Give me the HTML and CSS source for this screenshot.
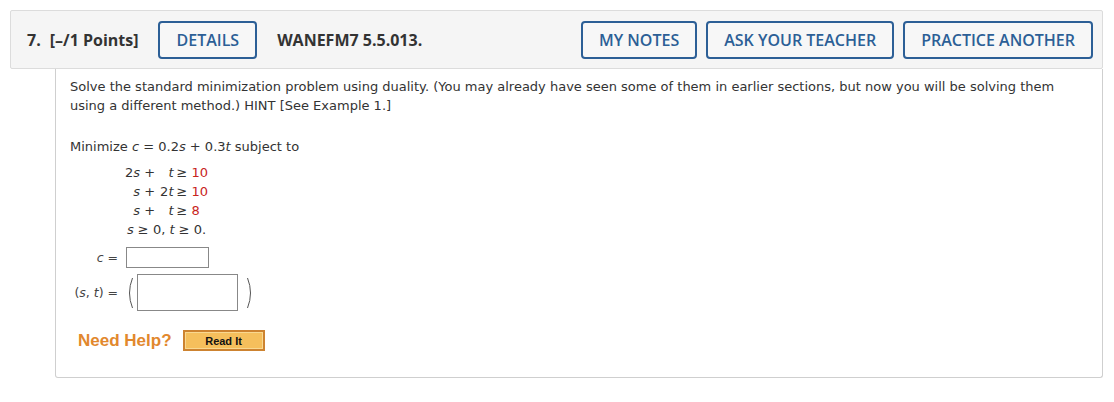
FILE: index.html
```html
<!DOCTYPE html>
<html>
<head>
<meta charset="utf-8">
<link rel="stylesheet" href="styles.css">
</head>
<body>
<div class="question">
  <div class="qhead">
    <span class="qnum">7.</span>
    <span class="points">[–/1 Points]</span>
    <span class="btn">DETAILS</span>
    <span class="qid">WANEFM7 5.5.013.</span>
    <span class="spacer"></span>
    <span class="btn">MY NOTES</span>
    <span class="btn">ASK YOUR TEACHER</span>
    <span class="btn">PRACTICE ANOTHER</span>
  </div>
  <div class="qbody">
    <p class="intro">Solve the standard minimization problem using duality. (You may already have seen some of them in earlier sections, but now you will be solving them using a different method.) HINT [See Example 1.]</p>
    <p class="minimize">Minimize <i>c</i> = 0.2<i>s</i> + 0.3<i>t</i> subject to</p>
    <div class="constraints">
      <span class="c1">2<i>s</i> +</span><span class="c2"><i>t</i></span><span class="c3">≥ <span class="red">10</span></span>
      <span class="c1"><i>s</i> +</span><span class="c2">2<i>t</i></span><span class="c3">≥ <span class="red">10</span></span>
      <span class="c1"><i>s</i> +</span><span class="c2"><i>t</i></span><span class="c3">≥ <span class="red">8</span></span>
      <span class="last"><i>s</i> ≥ 0, <i>t</i> ≥ 0.</span>
    </div>
    <div class="answers">
      <div class="arow">
        <span class="label"><i>c</i> =</span>
        <span class="box small"></span>
      </div>
      <div class="arow">
        <span class="label">(<i>s</i>, <i>t</i>) =</span>
        <svg class="paren" width="8" height="32" viewBox="0 0 8 32"><path d="M6.5 1 Q0.5 16 6.5 31" fill="none" stroke="#555" stroke-width="1"/></svg>
        <span class="box big"></span>
        <svg class="paren right" width="8" height="32" viewBox="0 0 8 32"><path d="M1.5 1 Q7.5 16 1.5 31" fill="none" stroke="#555" stroke-width="1"/></svg>
      </div>
    </div>
    <div class="help">
      <span class="needhelp">Need Help?</span>
      <span class="readit">Read It</span>
    </div>
  </div>
</div>
</body>
</html>
```
FILE: styles.css
```css
html, body { margin: 0; padding: 0; background: #fff; }
body { padding: 10px 11px 0 10px; }

.question { width: 1093px; }

.qhead {
  display: flex;
  align-items: center;
  height: 57px;
  padding: 0 9px 0 16px;
  background: #f5f5f5;
  border: 1px solid #dcdcdc;
  border-radius: 2px;
  font-family: "Open Sans", sans-serif;
  color: #333;
}
.qnum { font-weight: 700; font-size: 16px; margin-right: 9px; }
.points { font-weight: 700; font-size: 16px; margin-right: 20px; }
.qid { font-weight: 700; font-size: 16px; margin-left: 20px; }
.spacer { flex: 1; }

.btn {
  display: inline-flex;
  align-items: center;
  justify-content: center;
  box-sizing: border-box;
  height: 38px;
  padding: 0 16px;
  border: 2px solid #2c5f96;
  border-radius: 4px;
  color: #2c5f96;
  font-weight: 600;
  font-size: 16px;
  background: #f7f7f7;
  margin-left: 9px;
}
.qhead .btn:nth-child(3) { margin-left: 0; }

.qbody {
  margin-left: 45px;
  border: 1px solid #cfcfcf;
  border-top: none;
  border-radius: 0 0 3px 3px;
  padding: 8px 14px 22px 14px;
  height: 278px;
  font-family: "DejaVu Sans", Verdana, sans-serif;
  font-size: 13px;
  color: #333;
}
.intro { margin: 0; line-height: 19px; }
.minimize { margin: 22px 0 0 0; line-height: 19px; }

.constraints {
  display: grid;
  grid-template-columns: auto auto auto;
  justify-content: start;
  margin: 7px 0 0 55px;
  line-height: 19px;
}
.c1 { text-align: right; }
.c2 { text-align: right; padding-left: 5px; }
.c3 { padding-left: 3px; }
.last { grid-column: 1 / 4; text-align: center; }
.red { color: #c8241c; }

.answers { margin-top: 8px; }
.arow { display: flex; align-items: center; margin-bottom: 6px; }
.label { width: 48px; text-align: right; font-size: 12.5px; color: #444; margin-right: 8px; }
.box { display: inline-block; box-sizing: border-box; border: 1px solid #888; background: #fff; }
.box.small { width: 83px; height: 21px; }
.box.big { width: 101px; height: 37px; margin-left: 3px; }
.paren { display: block; }
.paren.right { margin-left: 8px; }

.help { display: flex; align-items: center; margin-top: 19px; padding-left: 8px; }
.needhelp {
  font-family: "Liberation Sans", Arial, sans-serif;
  font-weight: 700;
  font-size: 17px;
  color: #e2882d;
  margin-right: 11px;
}
.readit {
  display: inline-flex;
  align-items: center;
  justify-content: center;
  box-sizing: border-box;
  width: 82px;
  height: 21px;
  background: #f5bf5c;
  border: 2px solid #cd8330;
  box-shadow: inset 0 0 0 1px #f9d890;
  font-family: "Liberation Sans", Arial, sans-serif;
  font-weight: 700;
  font-size: 11px;
  color: #111;
}
```
